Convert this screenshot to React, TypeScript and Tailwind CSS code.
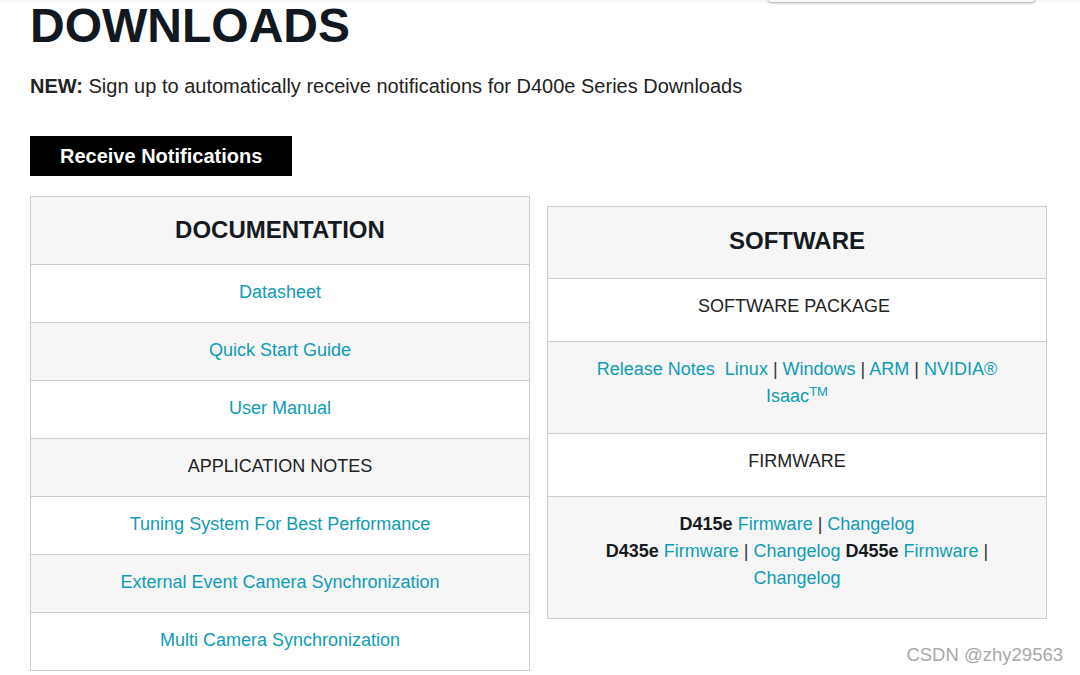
import React from "react";

const LINK = "text-[#0f9cb5]";

function Sep() {
  return <span className="text-[#333]"> | </span>;
}

const docRows = [
  { label: "Datasheet", link: true },
  { label: "Quick Start Guide", link: true },
  { label: "User Manual", link: true },
  { label: "APPLICATION NOTES", link: false },
  { label: "Tuning System For Best Performance", link: true },
  { label: "External Event Camera Synchronization", link: true },
  { label: "Multi Camera Synchronization", link: true },
];

export default function App() {
  return (
    <div
      className="relative min-h-[675px] w-[1080px] overflow-hidden bg-white pt-[2px] text-[#222]"
      style={{ fontFamily: '"Liberation Sans", Arial, sans-serif' }}
    >
      {/* top strip + dropdown edge */}
      <div className="absolute left-0 top-0 h-[3px] w-full bg-[#f8f8f8]" />
      <div className="absolute left-[768px] top-[-12px] h-[14px] w-[267px] rounded-b-sm bg-[#f9f9f9] shadow-[0_1px_3px_rgba(0,0,0,0.35)]" />

      <div className="relative px-[30px]">
        <h1 className="text-[48px] font-bold leading-[48px] text-[#121820]">
          DOWNLOADS
        </h1>

        <p className="mt-[23px] text-[20px] leading-[27px] text-[#222]">
          <span className="font-bold">NEW:</span> Sign up to automatically
          receive notifications for D400e Series Downloads
        </p>

        <button className="mt-[36px] block h-[40px] bg-black px-[30px] text-[20px] font-bold text-white">
          Receive Notifications
        </button>

        <div className="mt-[20px] flex items-start gap-[17px]">
          {/* Documentation */}
          <div className="w-[500px] border border-[#cdcdcd]">
            <div className="flex h-[67px] items-center justify-center bg-[#f6f6f6] pb-[2px] text-[24px] font-bold text-[#151a21]">
              DOCUMENTATION
            </div>
            {docRows.map((r, i) => (
              <div
                key={r.label}
                className={`flex h-[58px] items-center justify-center border-t border-[#cdcdcd] pb-[2px] text-[18px] ${
                  i % 2 === 0 ? "bg-white" : "bg-[#f6f6f6]"
                } ${r.link ? LINK : "text-[#222]"}`}
              >
                {r.label}
              </div>
            ))}
          </div>

          {/* Software */}
          <div className="mt-[10px] w-[500px] border border-[#cdcdcd] text-[18px] leading-[27px]">
            <div className="flex h-[71px] items-center justify-center bg-[#f6f6f6] pb-[4px] text-[24px] font-bold text-[#151a21]">
              SOFTWARE
            </div>
            <div className="h-[63px] border-t border-[#cdcdcd] bg-white pr-[6px] pt-[14px] text-center text-[#222]">
              SOFTWARE PACKAGE
            </div>
            <div className="h-[92px] border-t border-[#cdcdcd] bg-[#f6f6f6] pt-[14px] text-center">
              <span className={LINK}>Release Notes</span>&nbsp;{" "}
              <span className={LINK}>Linux</span>
              <Sep />
              <span className={LINK}>Windows</span>
              <Sep />
              <span className={LINK}>ARM</span>
              <Sep />
              <span className={LINK}>NVIDIA®</span>
              <br />
              <span className={LINK}>
                Isaac<sup className="text-[13px]">TM</sup>
              </span>
            </div>
            <div className="h-[63px] border-t border-[#cdcdcd] bg-white pt-[14px] text-center text-[#222]">
              FIRMWARE
            </div>
            <div className="h-[122px] border-t border-[#cdcdcd] bg-[#f6f6f6] pt-[14px] text-center">
              <span className="font-bold text-[#151a21]">D415e</span>{" "}
              <span className={LINK}>Firmware</span>
              <Sep />
              <span className={LINK}>Changelog</span>
              <br />
              <span className="font-bold text-[#151a21]">D435e</span>{" "}
              <span className={LINK}>Firmware</span>
              <Sep />
              <span className={LINK}>Changelog</span>{" "}
              <span className="font-bold text-[#151a21]">D455e</span>{" "}
              <span className={LINK}>Firmware</span>
              <Sep />
              <br />
              <span className={LINK}>Changelog</span>
            </div>
          </div>
        </div>
      </div>

      {/* watermark */}
      <div className="absolute right-[17px] top-[643px] text-[18.5px] leading-[24px] text-[#a8a8a8] [text-shadow:0_0_1px_#fff]">
        CSDN @zhy29563
      </div>
    </div>
  );
}
